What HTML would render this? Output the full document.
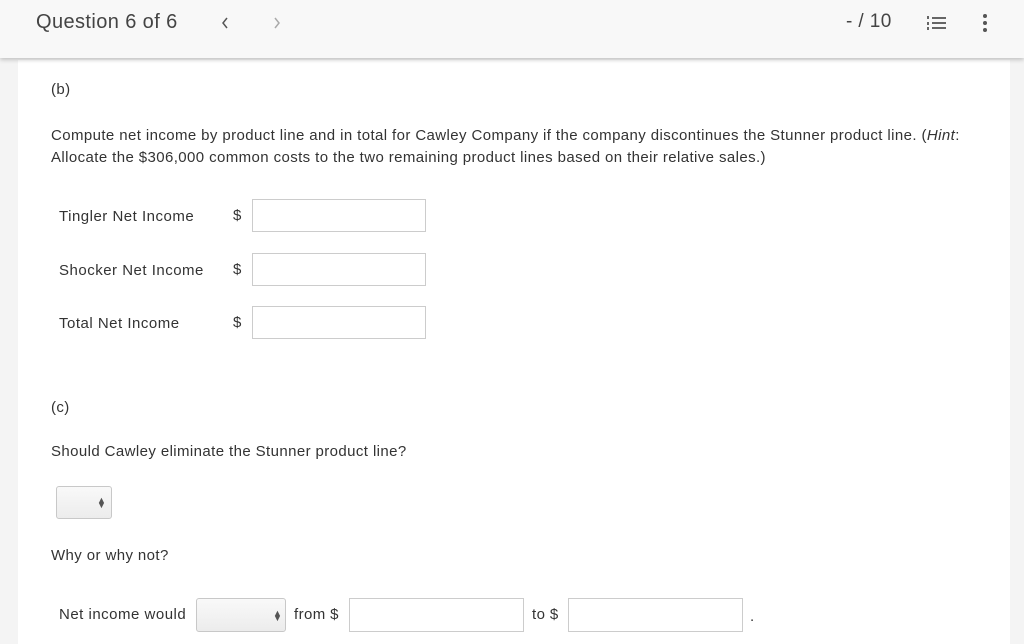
<!DOCTYPE html>
<html><head><meta charset="utf-8"><style>
*{margin:0;padding:0;box-sizing:border-box}
body{width:1024px;height:644px;overflow:hidden;background:#f4f4f4;font-family:"Liberation Sans",sans-serif;color:#333;position:relative}
.hdr{position:absolute;left:0;top:0;width:1024px;height:58px;background:#f8f8f8;box-shadow:0 2px 4px rgba(0,0,0,.2);z-index:2}
.hdr .t{position:absolute;left:36px;top:11px;font-size:20px;color:#444;letter-spacing:0.4px}
.panel{position:absolute;left:18px;top:60px;width:992px;height:584px;background:#fff}
.a{position:absolute;font-size:15px;color:#333;white-space:nowrap;letter-spacing:0.4px}
.l{letter-spacing:0.5px}
.in{position:absolute;height:33px;border:1px solid #ccc;background:#fff}
.sel{position:absolute;border:1px solid #c8c8c8;border-radius:3px;background:linear-gradient(#f9f9f9,#ececec)}
.arr{position:absolute;font-size:9px;line-height:5px;color:#555}
</style></head><body>
<div class="hdr">
<div class="t">Question 6 of 6</div>
<svg style="position:absolute;left:220px;top:16px" width="10" height="14"><path d="M7 2 L3 7 L7 12" stroke="#555" stroke-width="1.5" fill="none"/></svg>
<svg style="position:absolute;left:272px;top:16px" width="10" height="14"><path d="M3 2 L7 7 L3 12" stroke="#aaa" stroke-width="1.5" fill="none"/></svg>
<div class="t" style="left:846px;font-size:19px">- / 10</div>
<svg style="position:absolute;left:927px;top:15px" width="20" height="16" viewBox="0 0 20 16"><g fill="#666"><rect x="0" y="1" width="2" height="3"/><rect x="0" y="7" width="2" height="3"/><rect x="0" y="12" width="2" height="3"/><rect x="5" y="2" width="14" height="2"/><rect x="5" y="7" width="14" height="2"/><rect x="5" y="12" width="14" height="2"/></g></svg>
<svg style="position:absolute;left:982px;top:13px" width="6" height="20"><circle cx="3" cy="3" r="2" fill="#555"/><circle cx="3" cy="10" r="2" fill="#555"/><circle cx="3" cy="17" r="2" fill="#555"/></svg>
</div>
<div class="panel"></div>
<div class="a" style="left:51px;top:81px">(b)</div>
<div class="a" style="left:51px;top:125px;line-height:22px">Compute net income by product line and in total for Cawley Company if the company discontinues the Stunner product line. (<i>Hint</i>:<br>Allocate the $306,000 common costs to the two remaining product lines based on their relative sales.)</div>
<div class="a l" style="left:59px;top:208px">Tingler Net Income</div><div class="a" style="left:233px;top:207px">$</div><div class="in" style="left:252px;top:199px;width:174px"></div>
<div class="a l" style="left:59px;top:262px">Shocker Net Income</div><div class="a" style="left:233px;top:261px">$</div><div class="in" style="left:252px;top:253px;width:174px"></div>
<div class="a l" style="left:59px;top:315px">Total Net Income</div><div class="a" style="left:233px;top:314px">$</div><div class="in" style="left:252px;top:306px;width:174px"></div>
<div class="a" style="left:51px;top:399px">(c)</div>
<div class="a" style="left:51px;top:443px">Should Cawley eliminate the Stunner product line?</div>
<div class="sel" style="left:56px;top:486px;width:56px;height:33px"><div class="arr" style="left:40px;top:11px">&#9650;<br>&#9660;</div></div>
<div class="a" style="left:51px;top:547px">Why or why not?</div>
<div class="a l" style="left:59px;top:606px">Net income would</div>
<div class="sel" style="left:196px;top:598px;width:90px;height:34px"><div class="arr" style="left:76px;top:12px">&#9650;<br>&#9660;</div></div>
<div class="a" style="left:294px;top:606px">from $</div>
<div class="in" style="left:349px;top:598px;width:175px;height:34px"></div>
<div class="a" style="left:532px;top:606px">to $</div>
<div class="in" style="left:568px;top:598px;width:175px;height:34px"></div>
<div class="a" style="left:750px;top:608px">.</div>
</body></html>
